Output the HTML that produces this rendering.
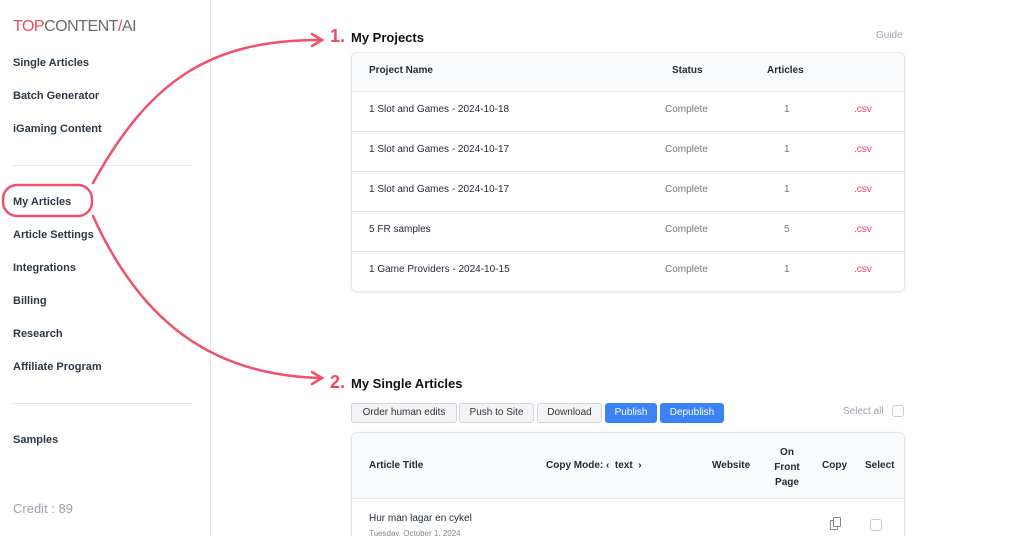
<!DOCTYPE html>
<html><head><style>
*{box-sizing:border-box;margin:0;padding:0}
html,body{width:1024px;height:536px;overflow:hidden}
body{background:#fff;font-family:"Liberation Sans",sans-serif;position:relative;color:#1f2937}
.side{position:absolute;left:0;top:0;width:211px;height:536px;border-right:1px solid #e5e7eb}
.logo{position:absolute;left:13px;top:18px;font-size:16px;letter-spacing:-0.5px;color:#6b6b6b}
.logo b{color:#ef4861;font-weight:normal}
.nav{position:absolute;left:13px;font-size:11px;color:#2d3748;font-weight:bold}
.hr{position:absolute;left:13px;width:179px;height:1px;background:#e5e7eb}
.credit{position:absolute;left:13px;top:501px;font-size:13px;color:#9ca3af}
.h{position:absolute;font-size:13px;font-weight:bold;color:#111}
.num{position:absolute;font-size:18px;font-weight:bold;color:#ef4861}
.card{position:absolute;left:351px;width:554px;border:1px solid #e5e7eb;border-radius:6px;box-shadow:0 1px 3px rgba(0,0,0,.08);overflow:hidden}
.row{position:relative;height:40px;border-top:1px solid #e5e7eb;font-size:10px}
.row span{position:absolute;top:12px}
.thead{background:#f9fafb;height:38px;position:relative;font-size:10px;font-weight:bold}
.thead span{position:absolute;top:12px}
.btn{position:absolute;top:403px;height:20px;border:1px solid #d1d5db;background:#f3f4f6;border-radius:3px;font-size:10px;color:#333;text-align:center;line-height:18px}
.blue{background:#3b82f6;border-color:#3b82f6;color:#fff}
</style></head><body>
<div class="side">
<div class="logo"><b>TOP</b>CONTENT<b>/</b>AI</div>
<div class="nav" style="top:57px">Single Articles</div>
<div class="nav" style="top:90px">Batch Generator</div>
<div class="nav" style="top:123px">iGaming Content</div>
<div class="hr" style="top:165px"></div>
<div class="nav" style="top:196px">My Articles</div>
<div class="nav" style="top:229px">Article Settings</div>
<div class="nav" style="top:262px">Integrations</div>
<div class="nav" style="top:295px">Billing</div>
<div class="nav" style="top:328px">Research</div>
<div class="nav" style="top:361px">Affiliate Program</div>
<div class="hr" style="top:403px"></div>
<div class="nav" style="top:434px">Samples</div>
<div class="credit">Credit : 89</div>
</div>
<div class="num" style="left:330px;top:26px">1.</div>
<div class="h" style="left:351px;top:30px">My Projects</div>
<div style="position:absolute;left:876px;top:30px;font-size:10px;color:#9ca3af">Guide</div>
<div class="card" style="top:52px">
<div class="thead"><span style="left:17px">Project Name</span><span style="left:320px">Status</span><span style="left:415px">Articles</span></div>
<div class="row"><span style="left:17px">1 Slot and Games - 2024-10-18</span><span style="left:313px;color:#777">Complete</span><span style="left:432px;color:#777">1</span><span style="left:502px;color:#ef4861">.csv</span></div>
<div class="row"><span style="left:17px">1 Slot and Games - 2024-10-17</span><span style="left:313px;color:#777">Complete</span><span style="left:432px;color:#777">1</span><span style="left:502px;color:#ef4861">.csv</span></div>
<div class="row"><span style="left:17px">1 Slot and Games - 2024-10-17</span><span style="left:313px;color:#777">Complete</span><span style="left:432px;color:#777">1</span><span style="left:502px;color:#ef4861">.csv</span></div>
<div class="row"><span style="left:17px">5 FR samples</span><span style="left:313px;color:#777">Complete</span><span style="left:432px;color:#777">5</span><span style="left:502px;color:#ef4861">.csv</span></div>
<div class="row"><span style="left:17px">1 Game Providers - 2024-10-15</span><span style="left:313px;color:#777">Complete</span><span style="left:432px;color:#777">1</span><span style="left:502px;color:#ef4861">.csv</span></div>
</div>
<div class="num" style="left:330px;top:372px">2.</div>
<div class="h" style="left:351px;top:376px">My Single Articles</div>
<div class="btn" style="left:351px;width:106px">Order human edits</div>
<div class="btn" style="left:459px;width:75px">Push to Site</div>
<div class="btn" style="left:537px;width:65px">Download</div>
<div class="btn blue" style="left:605px;width:52px">Publish</div>
<div class="btn blue" style="left:660px;width:64px">Depublish</div>
<div style="position:absolute;left:843px;top:406px;font-size:10px;color:#9ca3af">Select all</div>
<div style="position:absolute;left:892px;top:405px;width:12px;height:12px;border:1px solid #ccc;border-radius:3px"></div>
<div class="card" style="top:432px;height:110px">
<div style="background:#f9fafb;height:66px;position:relative;font-size:10px;font-weight:bold;border-bottom:1px solid #e5e7eb">
<span style="position:absolute;left:17px;top:27px">Article Title</span>
<span style="position:absolute;left:194px;top:27px">Copy Mode: ‹ &nbsp;text &nbsp;›</span>
<span style="position:absolute;left:360px;top:27px">Website</span>
<span style="position:absolute;left:421px;top:12px;text-align:center;line-height:15px;width:28px">On Front Page</span>
<span style="position:absolute;left:470px;top:27px">Copy</span>
<span style="position:absolute;left:513px;top:27px">Select</span>
</div>
<div style="position:absolute;left:17px;top:80px;font-size:10px">Hur man lagar en cykel</div>
<div style="position:absolute;left:17px;top:96px;font-size:8px;color:#888">Tuesday, October 1, 2024</div>
<div style="position:absolute;left:478px;top:87px;width:8px;height:10px;border:1px solid #888;border-radius:1px"></div>
<div style="position:absolute;left:481px;top:84px;width:8px;height:10px;border:1px solid #888;border-radius:1px;background:#fff"></div>
<div style="position:absolute;left:518px;top:86px;width:12px;height:12px;border:1px solid #ccc;border-radius:3px"></div>
</div>
<svg width="1024" height="536" style="position:absolute;left:0;top:0" fill="none" stroke="#f0506a" stroke-width="2.5" stroke-linecap="round">
<rect x="3" y="185" width="89" height="31" rx="14"/>
<path d="M93 183 C150 80 210 40 320 40"/>
<path d="M312 34 L322 40 L312 46"/>
<path d="M93 216 C140 320 210 375 320 378"/>
<path d="M312 372 L322 378 L312 384"/>
</svg>
</body></html>
